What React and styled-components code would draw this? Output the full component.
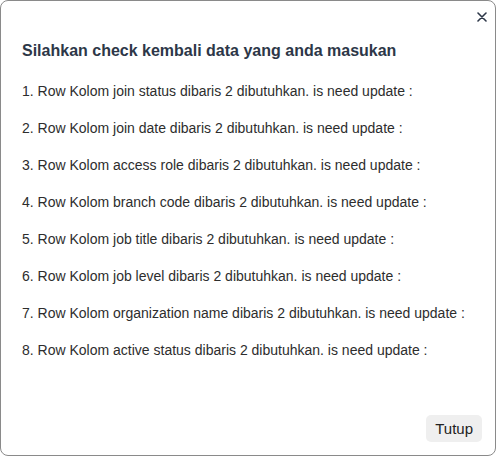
import React from "react";
import styled, { createGlobalStyle } from "styled-components";

const GlobalStyle = createGlobalStyle`
  html, body {
    margin: 0;
    padding: 0;
    background: #ffffff;
  }
  body {
    font-family: "Liberation Sans", Arial, sans-serif;
  }
`;

const Modal = styled.div`
  position: relative;
  box-sizing: border-box;
  width: 496px;
  height: 456px;
  border: 1px solid #8a8a8a;
  border-radius: 8px;
  background: #ffffff;
  display: flex;
  flex-direction: column;
`;

const CloseButton = styled.button`
  position: absolute;
  top: 7px;
  right: 4px;
  width: 18px;
  height: 18px;
  padding: 0;
  border: none;
  background: transparent;
  display: flex;
  align-items: center;
  justify-content: center;
  cursor: pointer;
`;

const Header = styled.h2`
  margin: 0;
  padding: 40px 21px 0;
  font-size: 16px;
  font-weight: 700;
  line-height: 20px;
  color: #2d3748;
`;

const Body = styled.ol`
  list-style: none;
  margin: 0;
  padding: 22px 21px 0;
  flex: 1;
  display: flex;
  flex-direction: column;
  gap: 21px;
`;

const Item = styled.li`
  font-size: 14px;
  line-height: 16px;
  color: #2d2d2d;
`;

const Footer = styled.div`
  display: flex;
  justify-content: flex-end;
  padding: 0 13px 13px;
`;

const Button = styled.button`
  height: 27px;
  padding: 0 9px;
  border: none;
  border-radius: 5px;
  background: #efefef;
  color: #222;
  font-family: "Liberation Sans", Arial, sans-serif;
  font-size: 15px;
  cursor: pointer;
`;

const fields = [
  "join status",
  "join date",
  "access role",
  "branch code",
  "job title",
  "job level",
  "organization name",
  "active status",
];

const App = () => (
  <>
    <GlobalStyle />
    <Modal>
      <CloseButton aria-label="close">
        <svg width="10" height="10" viewBox="0 0 10 10">
          <path d="M1 1L9 9M9 1L1 9" stroke="#2d3748" strokeWidth="1.6" strokeLinecap="round" />
        </svg>
      </CloseButton>
      <Header>Silahkan check kembali data yang anda masukan</Header>
      <Body>
        {fields.map((f, i) => (
          <Item key={f}>
            {i + 1}. Row Kolom {f} dibaris 2 dibutuhkan. is need update :
          </Item>
        ))}
      </Body>
      <Footer>
        <Button>Tutup</Button>
      </Footer>
    </Modal>
  </>
);

export default App;
